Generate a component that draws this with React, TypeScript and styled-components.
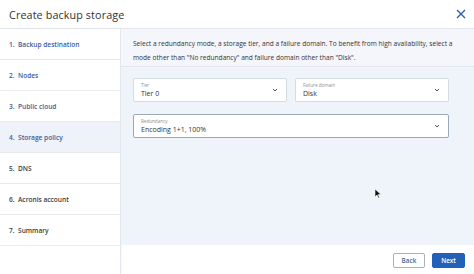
import React from 'react';
import styled, { createGlobalStyle } from 'styled-components';

const GlobalStyle = createGlobalStyle`
  html, body {
    margin: 0;
    padding: 0;
    background: #ffffff;
    font-family: "Open Sans", "Noto Sans", sans-serif;
  }
`;

const Dialog = styled.div`
  width: 474px;
  height: 274px;
  display: flex;
  flex-direction: column;
  background: #fff;
  position: relative;
  overflow: hidden;
`;

const Header = styled.div`
  height: 28px;
  display: flex;
  align-items: center;
  justify-content: space-between;
  padding: 0 8px 0 9px;
  border-bottom: 1px solid #e3e7ee;
`;

const Title = styled.h1`
  margin: 0;
  font-size: 10.8px;
  font-weight: 400;
  color: #333;
  letter-spacing: 0.1px;
`;

const CloseButton = styled.button`
  border: 0;
  background: none;
  padding: 0;
  width: 10px;
  height: 10px;
  display: flex;
  cursor: pointer;
`;

const Body = styled.div`
  flex: 1;
  display: flex;
`;

const Sidebar = styled.nav`
  width: 120px;
  border-right: 1px solid #e3e7ee;
  box-shadow: 1px 0 2px rgba(0, 0, 0, 0.04);
  display: flex;
  flex-direction: column;
`;

const Step = styled.div<{ $active?: boolean; $done?: boolean }>`
  height: 31px;
  box-sizing: border-box;
  display: flex;
  align-items: center;
  padding-left: 9px;
  font-size: 6.6px;
  font-weight: 600;
  color: ${p => (p.$done || p.$active ? '#3c5c9c' : '#3a3a3a')};
  background: ${p => (p.$active ? '#eef2f9' : '#fff')};
  border-bottom: 1px solid #e6e9ee;
`;

const Main = styled.div`
  flex: 1;
  display: flex;
  flex-direction: column;
`;

const Panel = styled.div`
  height: 216px;
  background: #eff3fa;
  display: flex;
  flex-direction: column;
`;

const Description = styled.p`
  margin: 0;
  height: 38px;
  box-sizing: border-box;
  padding: 8px 10px 0 12px;
  font-size: 6.6px;
  line-height: 13.5px;
  color: #333;
  background: #f4f6fb;
  border-bottom: 1px solid #e2e6ee;
`;

const Fields = styled.div`
  display: grid;
  grid-template-columns: 154px 154px;
  column-gap: 8px;
  row-gap: 12px;
  padding: 11px 0 0 12px;
`;

const Select = styled.div<{ $wide?: boolean; $focused?: boolean }>`
  grid-column: ${p => (p.$wide ? '1 / span 2' : 'auto')};
  height: 24px;
  box-sizing: border-box;
  background: #fff;
  border: 1px solid ${p => (p.$focused ? '#9aa8b8' : '#d6dce5')};
  border-radius: 2px;
  display: flex;
  align-items: center;
  justify-content: space-between;
  padding: 0 8px 0 7px;
`;

const SelectText = styled.div`
  display: flex;
  flex-direction: column;
`;

const Label = styled.span`
  font-size: 4.6px;
  color: #8a8f98;
  line-height: 7px;
`;

const Value = styled.span`
  font-size: 7px;
  color: #333;
  line-height: 10px;
`;

const Footer = styled.div`
  flex: 1;
  display: flex;
  justify-content: flex-end;
  align-items: center;
  gap: 7px;
  padding-right: 9px;
  padding-top: 2px;
`;

const Button = styled.button<{ $primary?: boolean }>`
  height: 15px;
  box-sizing: border-box;
  padding: 0;
  width: ${p => (p.$primary ? 33 : 32)}px;
  font-family: inherit;
  font-size: 6.4px;
  font-weight: 600;
  border-radius: 2px;
  border: 1px solid ${p => (p.$primary ? '#2360b8' : '#a9b0ba')};
  background: ${p => (p.$primary ? '#2360b8' : '#fff')};
  color: ${p => (p.$primary ? '#fff' : '#4b6796')};
`;

const Cursor = styled.svg`
  position: absolute;
  left: 374px;
  top: 188px;
`;

const Chevron = () => (
  <svg width="6" height="4" viewBox="0 0 6 4">
    <path d="M1 1 L3 3 L5 1" fill="none" stroke="#555" strokeWidth="1" />
  </svg>
);

const steps = [
  'Backup destination',
  'Nodes',
  'Public cloud',
  'Storage policy',
  'DNS',
  'Acronis account',
  'Summary',
];

const App = () => (
  <>
    <GlobalStyle />
    <Dialog>
      <Header>
        <Title>Create backup storage</Title>
        <CloseButton aria-label="Close">
          <svg width="10" height="10" viewBox="0 0 10 10">
            <path d="M1 1 L9 9 M9 1 L1 9" stroke="#2c5ea8" strokeWidth="1.3" />
          </svg>
        </CloseButton>
      </Header>
      <Body>
        <Sidebar>
          {steps.map((s, i) => (
            <Step key={s} $done={i < 3} $active={i === 3}>
              {i + 1}.&nbsp;&nbsp;{s}
            </Step>
          ))}
        </Sidebar>
        <Main>
          <Panel>
            <Description>
              Select a redundancy mode, a storage tier, and a failure domain. To benefit from high availability, select a
              mode other than "No redundancy" and failure domain other than "Disk".
            </Description>
            <Fields>
              <Select>
                <SelectText>
                  <Label>Tier</Label>
                  <Value>Tier 0</Value>
                </SelectText>
                <Chevron />
              </Select>
              <Select>
                <SelectText>
                  <Label>Failure domain</Label>
                  <Value>Disk</Value>
                </SelectText>
                <Chevron />
              </Select>
              <Select $wide $focused>
                <SelectText>
                  <Label>Redundancy</Label>
                  <Value>Encoding 1+1, 100%</Value>
                </SelectText>
                <Chevron />
              </Select>
            </Fields>
          </Panel>
          <Footer>
            <Button>Back</Button>
            <Button $primary>Next</Button>
          </Footer>
        </Main>
      </Body>
      <Cursor width="8" height="11" viewBox="0 0 8 11">
        <path d="M1 1 L1 9 L3 7 L4.5 10 L5.5 9.5 L4.2 6.6 L7 6.6 Z" fill="#111" stroke="#fff" strokeWidth="0.6" />
      </Cursor>
    </Dialog>
  </>
);

export default App;
